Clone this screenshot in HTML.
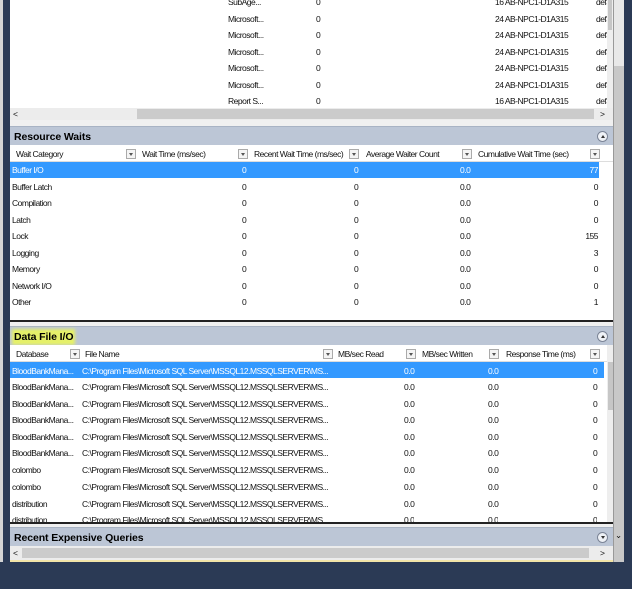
<!DOCTYPE html>
<html><head><style>
body{margin:0;width:632px;height:589px;overflow:hidden;background:#fff;font-family:"Liberation Sans",sans-serif;font-size:8.5px;color:#111;position:relative}
div{position:absolute;box-sizing:border-box}
.t{white-space:nowrap;letter-spacing:-0.5px;line-height:10px}
.r{text-align:right}
.hd{left:10px;width:603px;height:19px;background:#bcc6d6;border-top:1px solid #a8b3c4}
.hd b{position:absolute;left:4px;top:4px;font-size:10.5px;letter-spacing:-0.1px;color:#000}
.circ{right:5px;top:4px;width:11px;height:11px;border-radius:50%;border:1px solid #7b8496;background:#eef1f6}
.circ:after{content:"";position:absolute;left:2.5px;top:3px;border:2px solid transparent}
.up:after{border-bottom:3px solid #333;top:1px}
.dn:after{border-top:3px solid #333;top:3px}
.dd{width:10px;height:10px;border:1px solid #aaa;background:#f4f4f4}
.dd:after{content:"";position:absolute;left:2px;top:3px;border:2.5px solid transparent;border-top:3px solid #555}
.sel{left:10px;height:16px;background:#3399ff}
.w{color:#fff}
</style></head><body>
<div style="left:0;top:0;width:3px;height:589px;background:#d4d4d4"></div>
<div style="left:3px;top:0;width:7px;height:589px;background:#2b3a55"></div>
<div style="left:624px;top:0;width:8px;height:589px;background:#2b3a55"></div>
<div style="left:613px;top:0;width:11px;height:562px;background:#e8e8e8;border-left:1px solid #999"></div>
<div style="left:614px;top:66px;width:10px;height:496px;background:#c8c8c8"></div>
<div style="left:0;top:562px;width:632px;height:27px;background:#2b3a55"></div>

<!-- top grid -->
<div class="t" style="left:228px;top:-3px">SubAge...</div><div class="t" style="left:316px;top:-3px">0</div><div class="t" style="left:495px;top:-3px">16 AB-NPC1-D1A315</div><div class="t" style="left:596px;top:-3px">defa</div>
<div class="t" style="left:228px;top:14px">Microsoft...</div><div class="t" style="left:316px;top:14px">0</div><div class="t" style="left:495px;top:14px">24 AB-NPC1-D1A315</div><div class="t" style="left:596px;top:14px">defa</div>
<div class="t" style="left:228px;top:30px">Microsoft...</div><div class="t" style="left:316px;top:30px">0</div><div class="t" style="left:495px;top:30px">24 AB-NPC1-D1A315</div><div class="t" style="left:596px;top:30px">defa</div>
<div class="t" style="left:228px;top:47px">Microsoft...</div><div class="t" style="left:316px;top:47px">0</div><div class="t" style="left:495px;top:47px">24 AB-NPC1-D1A315</div><div class="t" style="left:596px;top:47px">defa</div>
<div class="t" style="left:228px;top:63px">Microsoft...</div><div class="t" style="left:316px;top:63px">0</div><div class="t" style="left:495px;top:63px">24 AB-NPC1-D1A315</div><div class="t" style="left:596px;top:63px">defa</div>
<div class="t" style="left:228px;top:80px">Microsoft...</div><div class="t" style="left:316px;top:80px">0</div><div class="t" style="left:495px;top:80px">24 AB-NPC1-D1A315</div><div class="t" style="left:596px;top:80px">defa</div>
<div class="t" style="left:228px;top:96px">Report S...</div><div class="t" style="left:316px;top:96px">0</div><div class="t" style="left:495px;top:96px">16 AB-NPC1-D1A315</div><div class="t" style="left:596px;top:96px">defa</div>
<div style="left:607px;top:0;width:6px;height:108px;background:#eee"></div>
<div style="left:608px;top:0;width:4px;height:30px;background:#c6c6c6"></div>
<div style="left:10px;top:108px;width:603px;height:12px;background:#ececec"></div>
<div style="left:137px;top:109px;width:457px;height:10px;background:#cbcbcb"></div>
<div class="t" style="left:13px;top:109px">&lt;</div><div class="t" style="left:600px;top:109px">&gt;</div>
<div style="left:10px;top:120px;width:603px;height:7px;background:#f0f0f0"></div>

<!-- Resource Waits -->
<div class="hd" style="top:126px"><b>Resource Waits</b><div class="circ up"></div></div>
<div style="left:10px;top:145px;width:603px;height:17px;background:#fff;border-bottom:1px solid #ddd"></div>
<div class="t" style="left:16px;top:149px">Wait Category</div><div class="dd" style="left:126px;top:149px"></div>
<div class="t" style="left:142px;top:149px">Wait Time (ms/sec)</div><div class="dd" style="left:238px;top:149px"></div>
<div class="t" style="left:254px;top:149px">Recent Wait Time (ms/sec)</div><div class="dd" style="left:349px;top:149px"></div>
<div class="t" style="left:366px;top:149px">Average Waiter Count</div><div class="dd" style="left:462px;top:149px"></div>
<div class="t" style="left:478px;top:149px">Cumulative Wait Time (sec)</div><div class="dd" style="left:590px;top:149px"></div>
<div class="sel" style="top:162px;width:589px"></div>
<div class="t w" style="left:12px;top:165px">Buffer I/O</div><div class="t w" style="left:242px;top:165px">0</div><div class="t w" style="left:354px;top:165px">0</div><div class="t w" style="left:460px;top:165px">0.0</div><div class="t w r" style="left:560px;width:38px;top:165px">77</div>
<div class="t" style="left:12px;top:182px">Buffer Latch</div><div class="t" style="left:242px;top:182px">0</div><div class="t" style="left:354px;top:182px">0</div><div class="t" style="left:460px;top:182px">0.0</div><div class="t r" style="left:560px;width:38px;top:182px">0</div>
<div class="t" style="left:12px;top:198px">Compilation</div><div class="t" style="left:242px;top:198px">0</div><div class="t" style="left:354px;top:198px">0</div><div class="t" style="left:460px;top:198px">0.0</div><div class="t r" style="left:560px;width:38px;top:198px">0</div>
<div class="t" style="left:12px;top:215px">Latch</div><div class="t" style="left:242px;top:215px">0</div><div class="t" style="left:354px;top:215px">0</div><div class="t" style="left:460px;top:215px">0.0</div><div class="t r" style="left:560px;width:38px;top:215px">0</div>
<div class="t" style="left:12px;top:231px">Lock</div><div class="t" style="left:242px;top:231px">0</div><div class="t" style="left:354px;top:231px">0</div><div class="t" style="left:460px;top:231px">0.0</div><div class="t r" style="left:560px;width:38px;top:231px">155</div>
<div class="t" style="left:12px;top:248px">Logging</div><div class="t" style="left:242px;top:248px">0</div><div class="t" style="left:354px;top:248px">0</div><div class="t" style="left:460px;top:248px">0.0</div><div class="t r" style="left:560px;width:38px;top:248px">3</div>
<div class="t" style="left:12px;top:264px">Memory</div><div class="t" style="left:242px;top:264px">0</div><div class="t" style="left:354px;top:264px">0</div><div class="t" style="left:460px;top:264px">0.0</div><div class="t r" style="left:560px;width:38px;top:264px">0</div>
<div class="t" style="left:12px;top:281px">Network I/O</div><div class="t" style="left:242px;top:281px">0</div><div class="t" style="left:354px;top:281px">0</div><div class="t" style="left:460px;top:281px">0.0</div><div class="t r" style="left:560px;width:38px;top:281px">0</div>
<div class="t" style="left:12px;top:297px">Other</div><div class="t" style="left:242px;top:297px">0</div><div class="t" style="left:354px;top:297px">0</div><div class="t" style="left:460px;top:297px">0.0</div><div class="t r" style="left:560px;width:38px;top:297px">1</div>
<div style="left:10px;top:320px;width:603px;height:2px;background:#222"></div>
<div style="left:10px;top:322px;width:603px;height:5px;background:#f0f0f0"></div>

<!-- Data File I/O -->
<div class="hd" style="top:326px"><b style="background:#e5f06a;box-shadow:0 0 3px 2px #e5f06a">Data File I/O</b><div class="circ up"></div></div>
<div style="left:10px;top:345px;width:603px;height:17px;background:#fff;border-bottom:1px solid #ddd"></div>
<div class="t" style="left:16px;top:349px">Database</div><div class="dd" style="left:70px;top:349px"></div>
<div class="t" style="left:85px;top:349px">File Name</div><div class="dd" style="left:323px;top:349px"></div>
<div class="t" style="left:338px;top:349px">MB/sec Read</div><div class="dd" style="left:406px;top:349px"></div>
<div class="t" style="left:422px;top:349px">MB/sec Written</div><div class="dd" style="left:489px;top:349px"></div>
<div class="t" style="left:506px;top:349px">Response Time (ms)</div><div class="dd" style="left:590px;top:349px"></div>
<div style="left:607px;top:345px;width:6px;height:177px;background:#eee"></div>
<div style="left:608px;top:362px;width:5px;height:48px;background:#c6c6c6"></div>
<div class="sel" style="top:362px;width:594px"></div>
<div class="t w" style="left:12px;top:366px">BloodBankMana...</div><div class="t w" style="left:82px;top:366px">C:\Program Files\Microsoft SQL Server\MSSQL12.MSSQLSERVER\MS...</div><div class="t w" style="left:404px;top:366px">0.0</div><div class="t w" style="left:488px;top:366px">0.0</div><div class="t w" style="left:593px;top:366px">0</div>
<div class="t" style="left:12px;top:382px">BloodBankMana...</div><div class="t" style="left:82px;top:382px">C:\Program Files\Microsoft SQL Server\MSSQL12.MSSQLSERVER\MS...</div><div class="t" style="left:404px;top:382px">0.0</div><div class="t" style="left:488px;top:382px">0.0</div><div class="t" style="left:593px;top:382px">0</div>
<div class="t" style="left:12px;top:399px">BloodBankMana...</div><div class="t" style="left:82px;top:399px">C:\Program Files\Microsoft SQL Server\MSSQL12.MSSQLSERVER\MS...</div><div class="t" style="left:404px;top:399px">0.0</div><div class="t" style="left:488px;top:399px">0.0</div><div class="t" style="left:593px;top:399px">0</div>
<div class="t" style="left:12px;top:415px">BloodBankMana...</div><div class="t" style="left:82px;top:415px">C:\Program Files\Microsoft SQL Server\MSSQL12.MSSQLSERVER\MS...</div><div class="t" style="left:404px;top:415px">0.0</div><div class="t" style="left:488px;top:415px">0.0</div><div class="t" style="left:593px;top:415px">0</div>
<div class="t" style="left:12px;top:432px">BloodBankMana...</div><div class="t" style="left:82px;top:432px">C:\Program Files\Microsoft SQL Server\MSSQL12.MSSQLSERVER\MS...</div><div class="t" style="left:404px;top:432px">0.0</div><div class="t" style="left:488px;top:432px">0.0</div><div class="t" style="left:593px;top:432px">0</div>
<div class="t" style="left:12px;top:448px">BloodBankMana...</div><div class="t" style="left:82px;top:448px">C:\Program Files\Microsoft SQL Server\MSSQL12.MSSQLSERVER\MS...</div><div class="t" style="left:404px;top:448px">0.0</div><div class="t" style="left:488px;top:448px">0.0</div><div class="t" style="left:593px;top:448px">0</div>
<div class="t" style="left:12px;top:465px">colombo</div><div class="t" style="left:82px;top:465px">C:\Program Files\Microsoft SQL Server\MSSQL12.MSSQLSERVER\MS...</div><div class="t" style="left:404px;top:465px">0.0</div><div class="t" style="left:488px;top:465px">0.0</div><div class="t" style="left:593px;top:465px">0</div>
<div class="t" style="left:12px;top:482px">colombo</div><div class="t" style="left:82px;top:482px">C:\Program Files\Microsoft SQL Server\MSSQL12.MSSQLSERVER\MS...</div><div class="t" style="left:404px;top:482px">0.0</div><div class="t" style="left:488px;top:482px">0.0</div><div class="t" style="left:593px;top:482px">0</div>
<div class="t" style="left:12px;top:499px">distribution</div><div class="t" style="left:82px;top:499px">C:\Program Files\Microsoft SQL Server\MSSQL12.MSSQLSERVER\MS...</div><div class="t" style="left:404px;top:499px">0.0</div><div class="t" style="left:488px;top:499px">0.0</div><div class="t" style="left:593px;top:499px">0</div>
<div class="t" style="left:12px;top:515px;height:7px;overflow:hidden">distribution</div><div class="t" style="left:82px;top:515px;height:7px;overflow:hidden">C:\Program Files\Microsoft SQL Server\MSSQL12.MSSQLSERVER\MS...</div><div class="t" style="left:404px;top:515px;height:7px;overflow:hidden">0.0</div><div class="t" style="left:488px;top:515px;height:7px;overflow:hidden">0.0</div><div class="t" style="left:593px;top:515px;height:7px;overflow:hidden">0</div>
<div style="left:10px;top:522px;width:603px;height:2px;background:#222"></div>
<div style="left:10px;top:524px;width:603px;height:4px;background:#f0f0f0"></div>

<!-- Recent Expensive Queries -->
<div class="hd" style="top:527px"><b>Recent Expensive Queries</b><div class="circ dn"></div></div>
<div style="left:10px;top:546px;width:603px;height:14px;background:#ececec"></div>
<div style="left:22px;top:548px;width:567px;height:10px;background:#cbcbcb"></div>
<div class="t" style="left:13px;top:548px">&lt;</div><div class="t" style="left:600px;top:548px">&gt;</div>
<div style="left:10px;top:560px;width:603px;height:2px;background:#f3e4a8"></div>
<div class="t" style="left:615px;top:530px">&#8964;</div>
</body></html>
